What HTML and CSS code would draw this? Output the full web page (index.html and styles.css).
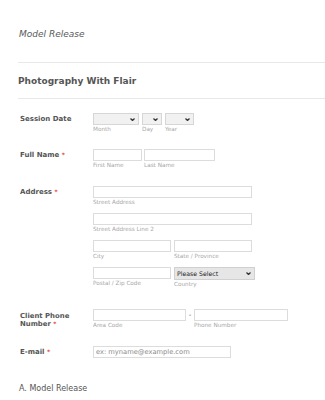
FILE: index.html
```html
<!DOCTYPE html>
<html lang="en">
<head>
<meta charset="utf-8">
<title>Model Release</title>
<link rel="stylesheet" href="styles.css">
</head>
<body>
<div class="page">
  <header class="sec sec-doc">
    <p class="doc-title">Model Release</p>
  </header>
  <div class="sec sec-form">
    <h1 class="form-title">Photography With Flair</h1>
  </div>
  <form class="form">
    <div class="row row-date">
      <div class="label">Session Date</div>
      <div class="group">
        <div class="field">
          <div class="box select w-month"><span></span><svg class="chev" viewBox="0 0 5 3" width="5" height="3"><path d="M0.5 0.5 L2.5 2.5 L4.5 0.5"/></svg></div>
          <span class="sublabel">Month</span>
        </div>
        <div class="field">
          <div class="box select w-day"><span></span><svg class="chev" viewBox="0 0 5 3" width="5" height="3"><path d="M0.5 0.5 L2.5 2.5 L4.5 0.5"/></svg></div>
          <span class="sublabel">Day</span>
        </div>
        <div class="field">
          <div class="box select w-year"><span></span><svg class="chev" viewBox="0 0 5 3" width="5" height="3"><path d="M0.5 0.5 L2.5 2.5 L4.5 0.5"/></svg></div>
          <span class="sublabel">Year</span>
        </div>
      </div>
    </div>

    <div class="row row-name">
      <div class="label">Full Name <span class="req">*</span></div>
      <div class="group group-name">
        <div class="field">
          <div class="box w-first"></div>
          <span class="sublabel">First Name</span>
        </div>
        <div class="field">
          <div class="box w-last"></div>
          <span class="sublabel">Last Name</span>
        </div>
      </div>
    </div>

    <div class="row row-address">
      <div class="label">Address <span class="req">*</span></div>
      <div class="stack">
        <div class="field">
          <div class="box w-street"></div>
          <span class="sublabel">Street Address</span>
        </div>
        <div class="field">
          <div class="box w-street"></div>
          <span class="sublabel">Street Address Line 2</span>
        </div>
        <div class="group">
          <div class="field">
            <div class="box w-half"></div>
            <span class="sublabel">City</span>
          </div>
          <div class="field">
            <div class="box w-half"></div>
            <span class="sublabel">State / Province</span>
          </div>
        </div>
        <div class="group">
          <div class="field">
            <div class="box w-half"></div>
            <span class="sublabel">Postal / Zip Code</span>
          </div>
          <div class="field">
            <div class="box select select-country w-country"><span class="sel-text">Please Select</span><svg class="chev" viewBox="0 0 5 3" width="5" height="3"><path d="M0.5 0.5 L2.5 2.5 L4.5 0.5"/></svg></div>
            <span class="sublabel sublabel-country">Country</span>
          </div>
        </div>
      </div>
    </div>

    <div class="row row-phone">
      <div class="label label-2line">
        <span class="label-line">Client Phone</span>
        <span class="label-line"><span>Number</span> <span class="req">*</span></span>
      </div>
      <div class="group group-phone">
        <div class="field">
          <div class="box w-area"></div>
          <span class="sublabel">Area Code</span>
        </div>
        <span class="dash">-</span>
        <div class="field">
          <div class="box w-phone"></div>
          <span class="sublabel">Phone Number</span>
        </div>
      </div>
    </div>

    <div class="row row-email">
      <div class="label">E-mail <span class="req">*</span></div>
      <div class="field">
        <div class="box w-email placeholder">ex: myname@example.com</div>
      </div>
    </div>

    <p class="section-head">A. Model Release</p>
  </form>
</div>
</body>
</html>
```

FILE: styles.css
```css
html, body {
  margin: 0;
  padding: 0;
  background: #ffffff;
}

body {
  font-family: "DejaVu Sans", Verdana, sans-serif;
  color: #555555;
}

.page {
  padding-left: 18px;
}

.sec {
  border-bottom: 1px solid #e8e8e8;
}

.doc-title {
  margin: 0;
  padding: 28px 0 22px 1px;
  font-style: italic;
  font-size: 9px;
  line-height: 12px;
  color: #5a5a5a;
}

.form-title {
  margin: 0;
  padding: 12px 0 11px 0;
  font-size: 9px;
  line-height: 12px;
  font-weight: bold;
  color: #555555;
}

.form {
  padding-left: 2px;
}

.row {
  display: flex;
  align-items: flex-start;
}

.row-date { margin-top: 14px; }
.row-name { margin-top: 15px; }
.row-address { margin-top: 16px; }
.row-phone { margin-top: 21px; }
.row-email { margin-top: 16px; }

.label {
  width: 73px;
  flex: none;
  font-size: 7px;
  line-height: 12px;
  font-weight: bold;
  color: #555555;
}

.label-2line {
  display: flex;
  flex-direction: column;
  font-size: 6.9px;
  line-height: 8.3px;
  padding-top: 2.7px;
}

.label-line {
  display: block;
}

.req {
  color: #e53935;
  font-size: 6px;
}

.group {
  display: flex;
  gap: 3px;
}

.group-name {
  gap: 2px;
}

.group-phone {
  gap: 0;
}

.stack {
  display: flex;
  flex-direction: column;
  gap: 6px;
}

.field {
  display: flex;
  flex-direction: column;
}

.box {
  height: 12px;
  box-sizing: border-box;
  border: 1px solid #dcdcdc;
  background: #ffffff;
}

.select {
  display: flex;
  align-items: center;
  justify-content: space-between;
  padding: 0 3px 0 2px;
  background: #f1f1f1;
  border-color: #d6d6d6;
}

.select-country {
  background: #e6e6e6;
  border-color: #d0d0d0;
  height: 13px;
}

.sel-text {
  font-size: 6.2px;
  line-height: 10px;
  color: #222222;
}

.chev {
  display: block;
  flex: none;
}

.chev path {
  fill: none;
  stroke: #333333;
  stroke-width: 1.3;
}

.sublabel {
  font-size: 5.7px;
  line-height: 9px;
  color: #a8a8a8;
}

.sublabel-country {
  line-height: 8px;
}

.dash {
  width: 8px;
  text-align: center;
  font-size: 7px;
  line-height: 12px;
  color: #555555;
}

.placeholder {
  font-size: 6.7px;
  line-height: 10px;
  padding-left: 2px;
  color: #8a8a8a;
}

.w-month { width: 46px; }
.w-day { width: 20px; }
.w-year { width: 29px; }
.w-first { width: 49px; }
.w-last { width: 71px; }
.w-street { width: 159px; }
.w-half { width: 78px; }
.w-country { width: 81px; }
.w-area { width: 93px; }
.w-phone { width: 94px; }
.w-email { width: 138px; }

.section-head {
  margin: 25px 0 0 -1px;
  font-size: 8px;
  line-height: 12px;
  color: #555555;
}
```
